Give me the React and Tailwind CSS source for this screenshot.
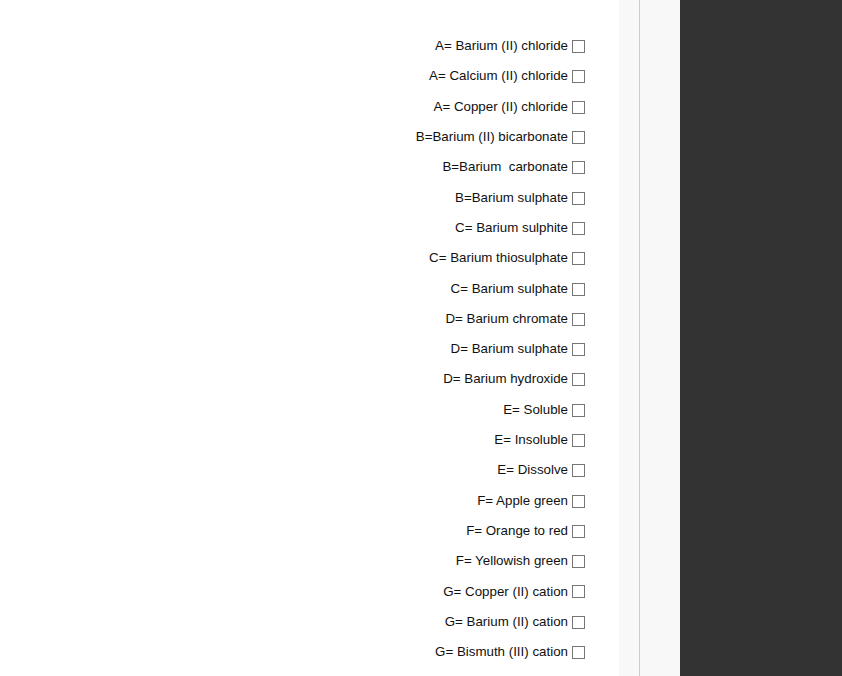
const items = [
  "A= Barium (II) chloride",
  "A= Calcium (II) chloride",
  "A= Copper (II) chloride",
  "B=Barium (II) bicarbonate",
  "B=Barium\u00a0 carbonate",
  "B=Barium sulphate",
  "C= Barium sulphite",
  "C= Barium thiosulphate",
  "C= Barium sulphate",
  "D= Barium chromate",
  "D= Barium sulphate",
  "D= Barium hydroxide",
  "E= Soluble",
  "E= Insoluble",
  "E= Dissolve",
  "F= Apple green",
  "F= Orange to red",
  "F= Yellowish green",
  "G= Copper (II) cation",
  "G= Barium (II) cation",
  "G= Bismuth (III) cation",
];

export default function App() {
  return (
    <div className="flex h-[676px] w-[842px] overflow-hidden bg-white" style={{ fontFamily: '"Liberation Sans", Arial, sans-serif' }}>
      <div className="w-[619px] bg-white pt-[31px]">
        <div className="flex flex-col items-end pr-[34px]">
          {items.map((t) => (
            <div key={t} className="flex h-[30.3px] items-center text-[13.33px] text-[#111]">
              <span>{t}</span>
              <span className="ml-[4px] mt-[1px] block h-[13px] w-[13px] border border-[#767676] bg-white"></span>
            </div>
          ))}
        </div>
      </div>
      <div className="w-[20px] bg-[#f8f8f8]"></div>
      <div className="w-[1px] bg-[#cccccc]"></div>
      <div className="w-[40px] bg-[#f8f8f8]"></div>
      <div className="flex-1 bg-[#333333]"></div>
    </div>
  );
}
